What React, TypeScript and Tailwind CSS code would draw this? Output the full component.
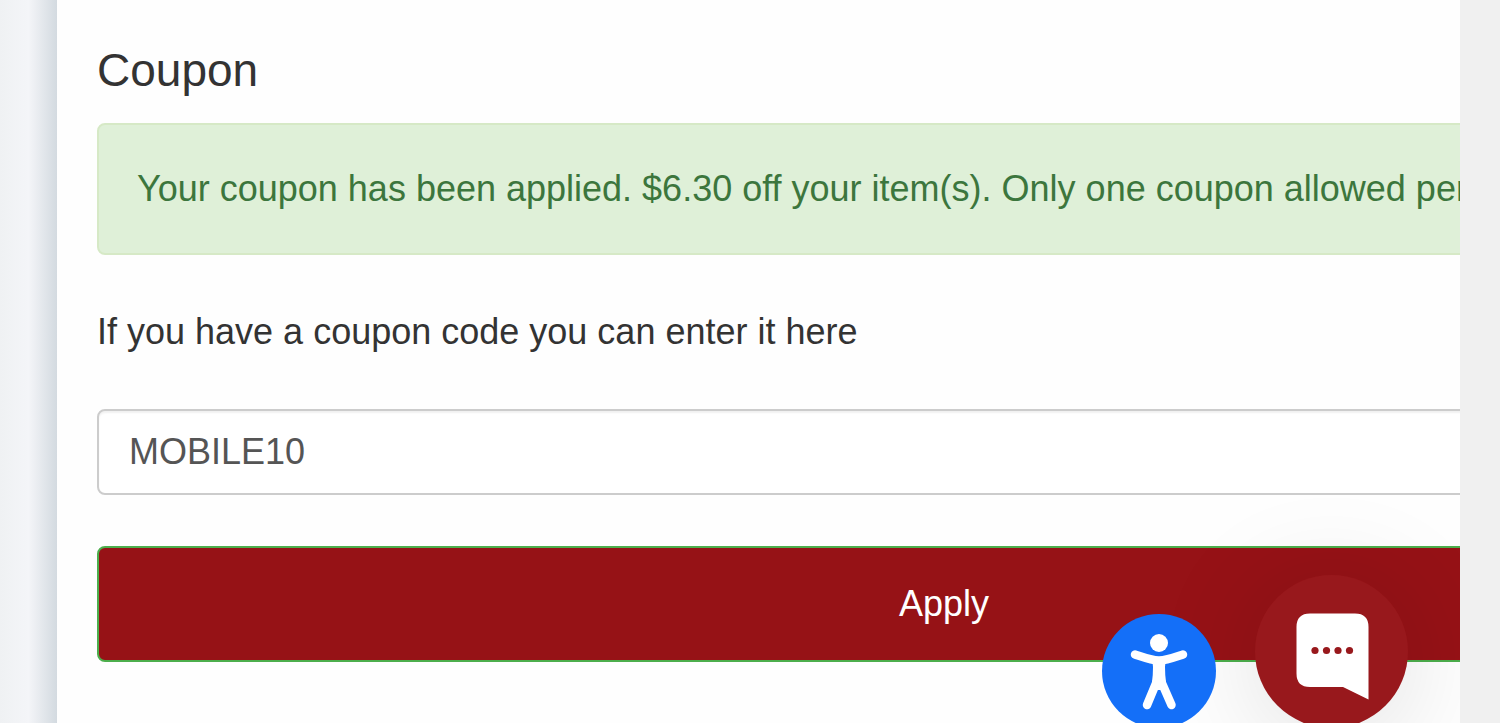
import React, { useState } from "react";

function AccessibilityIcon() {
  return (
    <svg viewBox="0 0 114 114" className="size-full" aria-hidden="true">
      <circle cx="57" cy="29" r="9" fill="#fff" />
      <g stroke="#fff" strokeWidth="8.500" strokeLinecap="round" strokeLinejoin="round" fill="none">
        <path d="M33 40.500 C42 43.500 50 46.500 57 46.500 C64 46.500 72 43.500 81 40.500" />
        <path d="M45 91 L55 67 M69.500 91 L59 67" />
      </g>
      <path d="M47 44 H67 Q63 47 63 53 Q63 61 64 68 L61 76 H57 H53 L50 68 Q51 61 51 53 Q51 47 47 44 Z" fill="#fff" />
    </svg>
  );
}

function ChatIcon() {
  return (
    <svg viewBox="0 0 153 153" className="size-full" aria-hidden="true">
      <path
        d="M55 38.500 H100 Q113.500 38.500 113.500 52 V124.500 L88 112 H55 Q41.500 112 41.500 98.500 V52 Q41.500 38.500 55 38.500 Z"
        fill="#fff"
      />
      <g fill="#98181c">
        <circle cx="60" cy="75.500" r="3.600" />
        <circle cx="71.500" cy="75.500" r="3.600" />
        <circle cx="83" cy="75.500" r="3.600" />
        <circle cx="94.500" cy="75.500" r="3.600" />
      </g>
    </svg>
  );
}

function CouponForm() {
  const [code, setCode] = useState("MOBILE10");
  return (
    <form
      className="flex min-w-[1694px] flex-col"
      onSubmit={(event) => event.preventDefault()}
    >
      <h2 className="text-[46px] leading-[52px] text-[#333333]">Coupon</h2>
      <div
        role="status"
        className="mt-[27px] rounded-lg border-2 border-[#d6e9c6] bg-[#dff0d8] px-[38px] py-[38px] text-4xl leading-[52px] whitespace-nowrap text-[#3c763d]"
      >
        Your coupon has been applied. $6.30 off your item(s). Only one coupon allowed per
      </div>
      <label
        htmlFor="coupon-code"
        className="mt-[51px] text-4xl leading-[52px] text-[#333333]"
      >
        If you have a coupon code you can enter it here
      </label>
      <input
        id="coupon-code"
        type="text"
        value={code}
        onChange={(event) => setCode(event.target.value)}
        className="mt-[51px] h-[86px] rounded-lg border-2 border-[#cccccc] bg-white px-[30px] text-4xl text-[#555555] shadow-[inset_0_2px_2px_rgba(0,0,0,0.06)] outline-none"
      />
      <button
        type="submit"
        className="mt-[51px] h-[116px] rounded-lg border-2 border-[#4cae4c] bg-[#961216] text-4xl text-white"
      >
        Apply
      </button>
    </form>
  );
}

export default function App() {
  return (
    <div className="flex min-h-screen bg-[#f0f0f0] font-['Liberation_Sans',Arial,sans-serif]">
      <div className="w-[57px] shrink-0 bg-linear-to-r from-[#eff1f3] via-[#f4f5f8] via-50% to-[#d3dae0]" />
      <main className="min-w-0 flex-1 overflow-hidden bg-[#fefefe] pt-11 pb-[60px] pl-10">
        <CouponForm />
      </main>
      <div className="z-20 w-10 shrink-0 bg-[#f0f0f0]" />
      <div className="fixed right-[92px] -bottom-[5px] z-10 flex items-end gap-[39px]">
        <button
          type="button"
          aria-label="Accessibility options"
          className="z-10 size-[114px] rounded-full bg-[#146ff8]"
        >
          <AccessibilityIcon />
        </button>
        <button
          type="button"
          aria-label="Open chat"
          className="size-[153px] rounded-full bg-[#98181c] shadow-[0_10px_110px_rgba(0,0,0,0.13)]"
        >
          <ChatIcon />
        </button>
      </div>
    </div>
  );
}
